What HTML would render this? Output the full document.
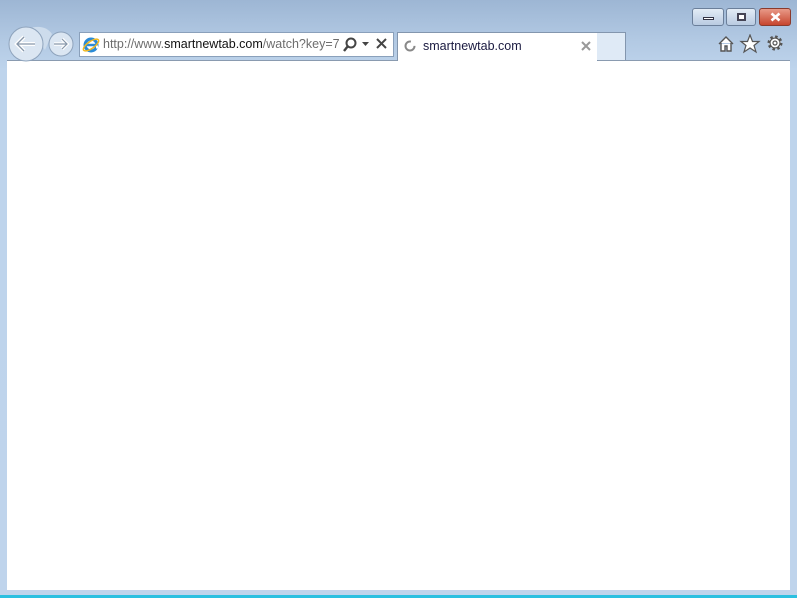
<!DOCTYPE html>
<html><head><style>
*{margin:0;padding:0;box-sizing:border-box}
body{width:797px;height:598px;overflow:hidden;position:relative;font-family:"Liberation Sans",sans-serif;background:linear-gradient(#9db6d4 0px,#b2c9e3 40px,#bed4ec 70px,#bfd4ec 100%)}
.abs{position:absolute}
.content{left:7px;top:60px;width:783px;height:530px;background:#fff;border-top:1px solid #8a9bb0}
.btm{left:0;top:595px;width:797px;height:3px;background:#2bc0e0}
.wb{top:8px;height:18px;border:1px solid #6b7f9a;border-radius:3px;background:linear-gradient(#e3ecf6,#b9cbe1)}
.addr{left:79px;top:32px;width:315px;height:25px;background:#fff;border:1px solid #8aa0bb}
.addrt{left:103px;top:32px;width:236px;height:25px;overflow:hidden;white-space:nowrap;font-size:12.5px;color:#6d6d6d;line-height:25px}
.tab{left:397px;top:32px;width:201px;height:29px;background:#fff;border:1px solid #8396ae;border-bottom:none;font-size:12.5px;color:#1a1a40;line-height:27px;padding-left:25px}
.nt{left:597px;top:32px;width:29px;height:28px;background:#dfeaf6;border:1px solid #8396ae;border-left:none;border-bottom:none}
</style></head><body>
<div class="abs content"></div>
<div class="abs btm"></div>
<div class="abs wb" style="left:692px;width:32px"><div class="abs" style="left:10px;top:8px;width:11px;height:3px;background:#fff;border:1px solid #334"></div></div>
<div class="abs wb" style="left:726px;width:30px"><div class="abs" style="left:10px;top:4px;width:9px;height:8px;border:2px solid #445;background:#fff"></div></div>
<div class="abs wb" style="left:759px;width:32px;background:linear-gradient(#e89a88,#c7452e);border-color:#8a3a2c"><svg class="abs" style="left:10px;top:3px" width="11" height="10"><path d="M1.5 1.5 L9.5 8.5 M9.5 1.5 L1.5 8.5" stroke="#fff" stroke-width="2.6"/></svg></div>
<svg class="abs" style="left:0;top:20px" width="80" height="45">
<path d="M30 8 Q45 4 52 14 L45 30 Z" fill="#cddcec"/>
<circle cx="26" cy="24" r="17" fill="#dbe6f2" stroke="#8ea3bc"/>
<path d="M17 24 H35 M24 17 L17 24 L24 31" stroke="#fff" stroke-width="4" fill="none"/>
<path d="M17 24 H35 M24 17 L17 24 L24 31" stroke="#8797aa" stroke-width="1.3" fill="none"/>
<circle cx="61" cy="24" r="12" fill="#dbe6f2" stroke="#8ea3bc"/>
<path d="M54 24 H67 M62 19 L67 24 L62 29" stroke="#fff" stroke-width="3.5" fill="none"/>
<path d="M54 24 H67 M62 19 L67 24 L62 29" stroke="#8797aa" stroke-width="1.2" fill="none"/>
</svg>
<div class="abs addr"></div>
<div class="abs addrt">http://www.<span style="color:#111">smartnewtab.com</span>/watch?key=7</div>
<svg class="abs" style="left:81px;top:35px" width="20" height="20"><circle cx="10" cy="10" r="6" fill="none" stroke="#2a8ad6" stroke-width="3"/><path d="M5 10 H15" stroke="#2a8ad6" stroke-width="2.5"/><path d="M15 12 h2" stroke="#fff" stroke-width="3"/><ellipse cx="10" cy="10" rx="9" ry="3.5" fill="none" stroke="#f0b820" stroke-width="1.5" transform="rotate(-35 10 10)"/></svg>
<svg class="abs" style="left:342px;top:36px" width="50" height="18">
<circle cx="9" cy="7" r="4.5" fill="none" stroke="#444" stroke-width="2"/><path d="M6 10 L2 15" stroke="#444" stroke-width="2.4"/>
<path d="M20 6 h7 l-3.5 4z" fill="#444"/>
<path d="M35 3 L44 12 M44 3 L35 12" stroke="#444" stroke-width="2"/></svg>
<div class="abs tab">smartnewtab.com</div>
<svg class="abs" style="left:403px;top:39px" width="14" height="14"><circle cx="7" cy="7" r="4.5" fill="none" stroke="#888" stroke-width="2" stroke-dasharray="22 6"/></svg>
<svg class="abs" style="left:580px;top:40px" width="12" height="12"><path d="M2 2 L10 10 M10 2 L2 10" stroke="#999" stroke-width="2"/></svg>
<div class="abs nt"></div>
<svg class="abs" style="left:716px;top:34px" width="72" height="20">
<path d="M3 10 L10 3 L17 10 M5 9 V17 H9 V12 H11 V17 H15 V9" fill="#fff" stroke="#555" stroke-width="1.4"/>
<path d="M34 1 L36.5 7.5 L43 7.5 L38 11.5 L40 18 L34 14 L28 18 L30 11.5 L25 7.5 L31.5 7.5Z" fill="#fff" stroke="#555" stroke-width="1.2"/>
<circle cx="59" cy="9" r="6" fill="#fff" stroke="#555" stroke-width="3" stroke-dasharray="2.4 2.3"/><circle cx="59" cy="9" r="5" fill="#fff" stroke="#555" stroke-width="1.2"/><circle cx="59" cy="9" r="2" fill="none" stroke="#555" stroke-width="1.2"/>
</svg>
</body></html>
